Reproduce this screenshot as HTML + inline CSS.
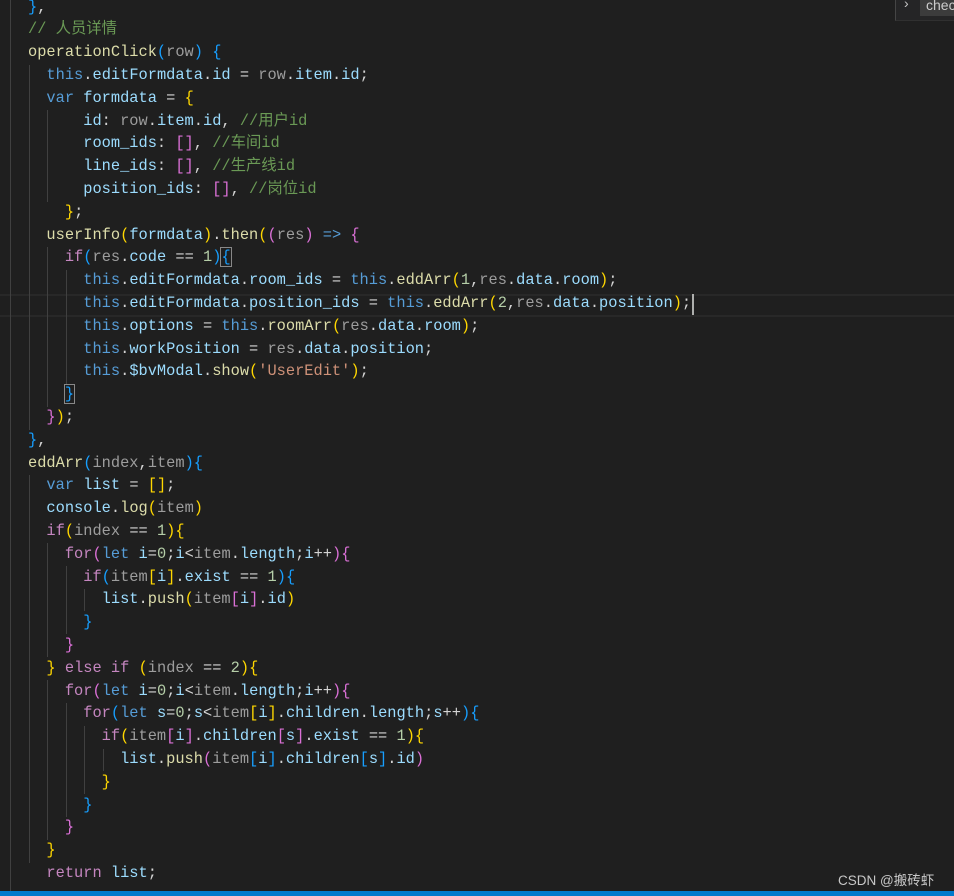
<!DOCTYPE html>
<html><head><meta charset="utf-8"><style>
html,body{margin:0;padding:0;background:#1f1f1f;width:954px;height:896px;overflow:hidden;position:relative}
pre{position:absolute;left:28px;top:-4.4px;margin:0;font-family:"Liberation Mono","Noto Sans CJK SC",monospace;font-size:15.35px;line-height:22.8px;color:#d4d4d4;white-space:pre}
.k{color:#569cd6}.c{color:#c586c0}.f{color:#dcdcaa}.p{color:#9cdcfe}.g{color:#9d9d9d}.n{color:#b5cea8}.s{color:#ce9178}.cm{color:#6a9955}.y{color:#ffd700}.m{color:#da70d6}.b{color:#179fff}
.gd{position:absolute;width:1px;background:#404040}
.hl{position:absolute;left:0;width:954px;height:19px;top:294px;border-top:2px solid #282828;border-bottom:2px solid #282828}
</style></head><body>
<div class="hl"></div>
<div class="gd" style="left:10px;top:0;height:891px"></div>
<div class="gd" style="left:29px;top:65px;height:365px"></div>
<div class="gd" style="left:29px;top:475px;height:388px"></div>
<div class="gd" style="left:47px;top:110px;height:92px"></div>
<div class="gd" style="left:47px;top:247px;height:160px"></div>
<div class="gd" style="left:47px;top:543px;height:114px"></div>
<div class="gd" style="left:47px;top:680px;height:160px"></div>
<div class="gd" style="left:66px;top:270px;height:114px"></div>
<div class="gd" style="left:66px;top:566px;height:68px"></div>
<div class="gd" style="left:66px;top:703px;height:114px"></div>
<div class="gd" style="left:84px;top:589px;height:22px"></div>
<div class="gd" style="left:84px;top:726px;height:68px"></div>
<div class="gd" style="left:103px;top:749px;height:22px"></div>
<div style="position:absolute;left:692px;top:294px;width:2px;height:21px;background:#aeafad"></div>
<pre><span class="b">}</span>,
<span class="cm">// 人员详情</span>
<span class="f">operationClick</span><span class="b">(</span><span class="g">row</span><span class="b">)</span> <span class="b">{</span>
  <span class="k">this</span>.<span class="p">editFormdata</span>.<span class="p">id</span> = <span class="g">row</span>.<span class="p">item</span>.<span class="p">id</span>;
  <span class="k">var</span> <span class="p">formdata</span> = <span class="y">{</span>
      <span class="p">id</span>: <span class="g">row</span>.<span class="p">item</span>.<span class="p">id</span>, <span class="cm">//用户id</span>
      <span class="p">room_ids</span>: <span class="m">[]</span>, <span class="cm">//车间id</span>
      <span class="p">line_ids</span>: <span class="m">[]</span>, <span class="cm">//生产线id</span>
      <span class="p">position_ids</span>: <span class="m">[]</span>, <span class="cm">//岗位id</span>
    <span class="y">}</span>;
  <span class="f">userInfo</span><span class="y">(</span><span class="p">formdata</span><span class="y">)</span>.<span class="f">then</span><span class="y">(</span><span class="m">(</span><span class="g">res</span><span class="m">)</span> <span class="k">=&gt;</span> <span class="m">{</span>
    <span class="c">if</span><span class="b">(</span><span class="g">res</span>.<span class="p">code</span> == <span class="n">1</span><span class="b">)</span><span class="b" style="outline:1px solid #888">{</span>
      <span class="k">this</span>.<span class="p">editFormdata</span>.<span class="p">room_ids</span> = <span class="k">this</span>.<span class="f">eddArr</span><span class="y">(</span><span class="n">1</span>,<span class="g">res</span>.<span class="p">data</span>.<span class="p">room</span><span class="y">)</span>;
      <span class="k">this</span>.<span class="p">editFormdata</span>.<span class="p">position_ids</span> = <span class="k">this</span>.<span class="f">eddArr</span><span class="y">(</span><span class="n">2</span>,<span class="g">res</span>.<span class="p">data</span>.<span class="p">position</span><span class="y">)</span>;
      <span class="k">this</span>.<span class="p">options</span> = <span class="k">this</span>.<span class="f">roomArr</span><span class="y">(</span><span class="g">res</span>.<span class="p">data</span>.<span class="p">room</span><span class="y">)</span>;
      <span class="k">this</span>.<span class="p">workPosition</span> = <span class="g">res</span>.<span class="p">data</span>.<span class="p">position</span>;
      <span class="k">this</span>.<span class="p">$bvModal</span>.<span class="f">show</span><span class="y">(</span><span class="s">'UserEdit'</span><span class="y">)</span>;
    <span class="b" style="outline:1px solid #888">}</span>
  <span class="m">}</span><span class="y">)</span>;
<span class="b">}</span>,
<span class="f">eddArr</span><span class="b">(</span><span class="g">index</span>,<span class="g">item</span><span class="b">)</span><span class="b">{</span>
  <span class="k">var</span> <span class="p">list</span> = <span class="y">[]</span>;
  <span class="p">console</span>.<span class="f">log</span><span class="y">(</span><span class="g">item</span><span class="y">)</span>
  <span class="c">if</span><span class="y">(</span><span class="g">index</span> == <span class="n">1</span><span class="y">)</span><span class="y">{</span>
    <span class="c">for</span><span class="m">(</span><span class="k">let</span> <span class="p">i</span>=<span class="n">0</span>;<span class="p">i</span>&lt;<span class="g">item</span>.<span class="p">length</span>;<span class="p">i</span>++<span class="m">)</span><span class="m">{</span>
      <span class="c">if</span><span class="b">(</span><span class="g">item</span><span class="y">[</span><span class="p">i</span><span class="y">]</span>.<span class="p">exist</span> == <span class="n">1</span><span class="b">)</span><span class="b">{</span>
        <span class="p">list</span>.<span class="f">push</span><span class="y">(</span><span class="g">item</span><span class="m">[</span><span class="p">i</span><span class="m">]</span>.<span class="p">id</span><span class="y">)</span>
      <span class="b">}</span>
    <span class="m">}</span>
  <span class="y">}</span> <span class="c">else</span> <span class="c">if</span> <span class="y">(</span><span class="g">index</span> == <span class="n">2</span><span class="y">)</span><span class="y">{</span>
    <span class="c">for</span><span class="m">(</span><span class="k">let</span> <span class="p">i</span>=<span class="n">0</span>;<span class="p">i</span>&lt;<span class="g">item</span>.<span class="p">length</span>;<span class="p">i</span>++<span class="m">)</span><span class="m">{</span>
      <span class="c">for</span><span class="b">(</span><span class="k">let</span> <span class="p">s</span>=<span class="n">0</span>;<span class="p">s</span>&lt;<span class="g">item</span><span class="y">[</span><span class="p">i</span><span class="y">]</span>.<span class="p">children</span>.<span class="p">length</span>;<span class="p">s</span>++<span class="b">)</span><span class="b">{</span>
        <span class="c">if</span><span class="y">(</span><span class="g">item</span><span class="m">[</span><span class="p">i</span><span class="m">]</span>.<span class="p">children</span><span class="m">[</span><span class="p">s</span><span class="m">]</span>.<span class="p">exist</span> == <span class="n">1</span><span class="y">)</span><span class="y">{</span>
          <span class="p">list</span>.<span class="f">push</span><span class="m">(</span><span class="g">item</span><span class="b">[</span><span class="p">i</span><span class="b">]</span>.<span class="p">children</span><span class="b">[</span><span class="p">s</span><span class="b">]</span>.<span class="p">id</span><span class="m">)</span>
        <span class="y">}</span>
      <span class="b">}</span>
    <span class="m">}</span>
  <span class="y">}</span>
  <span class="c">return</span> <span class="p">list</span>;</pre>
<div style="position:absolute;left:895px;top:0;width:59px;height:20px;background:#252526;border-left:1px solid #454545;border-bottom:1px solid #303030"></div>
<div style="position:absolute;left:904px;top:-5px;color:#c5c5c5;font-family:'Liberation Sans',sans-serif;font-size:14px">&#8250;</div>
<div style="position:absolute;left:920px;top:0;width:34px;height:16px;background:#3c3c3c;overflow:hidden;color:#cccccc;font-family:'Liberation Sans',sans-serif;font-size:14px;line-height:10px;padding-left:6px">chec</div>
<div style="position:absolute;left:838px;top:869px;color:#c8c8c8;font-family:'Liberation Sans','Noto Sans CJK SC',sans-serif;font-size:13.5px">CSDN @搬砖虾</div>
<div style="position:absolute;left:0;top:891px;width:954px;height:5px;background:#007acc"></div>
</body></html>
